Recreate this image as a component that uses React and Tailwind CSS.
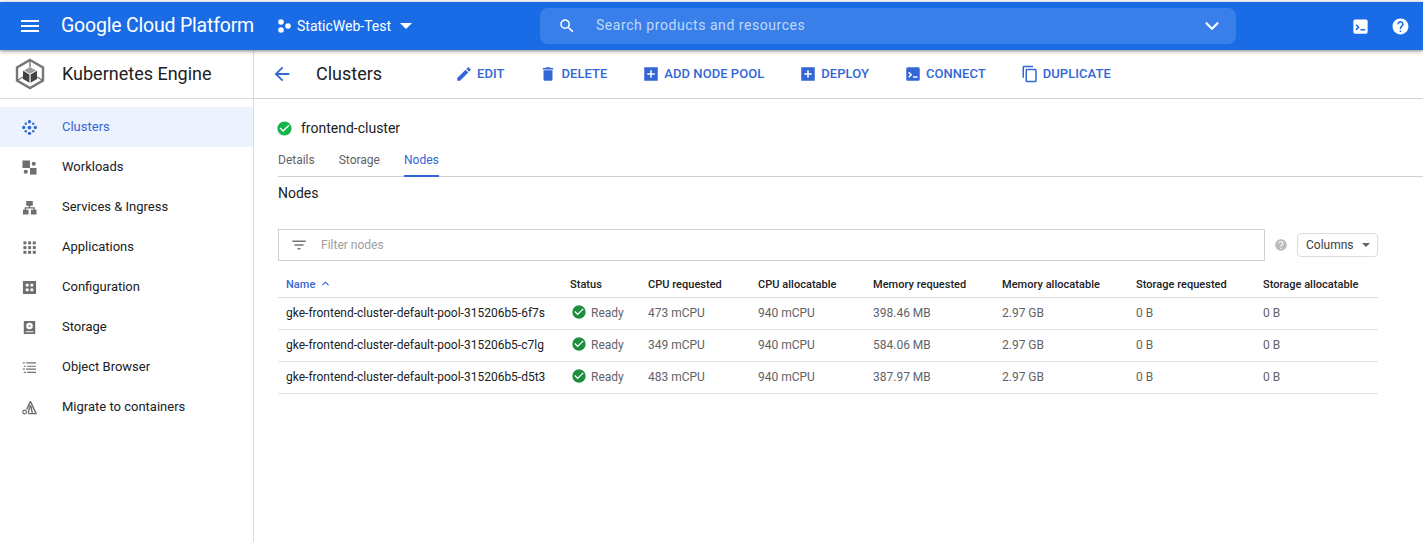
import { ChevronDown, ChevronUp } from "lucide-react";

const P = {
  menu: "M3 18h18v-2H3v2zm0-5h18v-2H3v2zm0-7v2h18V6H3z",
  search: "M15.5 14h-.79l-.28-.27A6.471 6.471 0 0 0 16 9.5 6.5 6.5 0 1 0 9.5 16c1.61 0 3.09-.59 4.23-1.57l.27.28v.79l5 4.99L20.49 19l-4.99-5zm-6 0C7.01 14 5 11.99 5 9.5S7.01 5 9.5 5 14 7.01 14 9.5 11.99 14 9.5 14z",
  edit: "M3 17.25V21h3.75L17.81 9.94l-3.75-3.75L3 17.25zM20.71 7.04a1 1 0 0 0 0-1.41l-2.34-2.34a1 1 0 0 0-1.41 0l-1.83 1.83 3.75 3.75 1.83-1.83z",
  del: "M6 19c0 1.1.9 2 2 2h8c1.1 0 2-.9 2-2V7H6v12zM19 4h-3.5l-1-1h-5l-1 1H5v2h14V4z",
  add: "M3 3h18v18H3V3zm14 10v-2h-4V7h-2v4H7v2h4v4h2v-4h4z",
  copy: "M16 1H4c-1.1 0-2 .9-2 2v14h2V3h12V1zm3 4H8c-1.1 0-2 .9-2 2v14c0 1.1.9 2 2 2h11c1.1 0 2-.9 2-2V7c0-1.1-.9-2-2-2zm0 16H8V7h11v14z",
  term: "M5 3h14a2 2 0 0 1 2 2v14a2 2 0 0 1-2 2H5a2 2 0 0 1-2-2V5a2 2 0 0 1 2-2zm.6 7.4L8.2 13l-2.6 2.6L7 17l4-4-4-4-1.4 1.4zM12 15v2h6v-2h-6z",
  check: "M12 2a10 10 0 1 0 0 20 10 10 0 0 0 0-20zm-2 15l-5-5 1.41-1.41L10 14.17l7.59-7.59L19 8l-9 9z",
  help: "M12 2C6.48 2 2 6.48 2 12s4.48 10 10 10 10-4.48 10-10S17.52 2 12 2zm1 17h-2v-2h2v2zm2.07-7.75l-.9.92C13.45 12.9 13 13.5 13 15h-2v-.5c0-1.1.45-2.1 1.17-2.83l1.24-1.26c.37-.36.59-.86.59-1.41 0-1.1-.9-2-2-2s-2 .9-2 2H8c0-2.21 1.79-4 4-4s4 1.79 4 4c0 .88-.36 1.68-.93 2.25z",
  back: "M20 11H7.83l5.59-5.59L12 4l-8 8 8 8 1.41-1.41L7.83 13H20v-2z",
  filter: "M10 18h4v-2h-4v2zM3 6v2h18V6H3zm3 7h12v-2H6v2z",
};

function Icon({ d, className }) {
  return (
    <svg viewBox="0 0 24 24" fill="currentColor" className={className}>
      <path d={d} fillRule="evenodd" />
    </svg>
  );
}

function NavIcon({ name, className }) {
  return (
    <svg viewBox="0 0 16 16" fill="currentColor" className={className}>
      {name === "clusters" && (
        <>
          <circle cx="8" cy="1.800" r="1.800" />
          <circle cx="8" cy="14.200" r="1.800" />
          <circle cx="1.800" cy="8" r="1.800" />
          <circle cx="14.200" cy="8" r="1.800" />
          <circle cx="8" cy="8" r="2" />
          <circle cx="4" cy="4" r="1.300" />
          <circle cx="12" cy="4" r="1.300" />
          <circle cx="4" cy="12" r="1.300" />
          <circle cx="12" cy="12" r="1.300" />
        </>
      )}
      {name === "workloads" && (
        <>
          <rect x="0.500" y="0.500" width="8" height="8" />
          <rect x="8.500" y="8.500" width="7" height="7" />
          <circle cx="12.500" cy="4" r="2.200" />
          <circle cx="4" cy="12.500" r="2.200" />
        </>
      )}
      {name === "services" && (
        <path d="M4.500 1h7v5H8.800v1.600h4.900v2.900h1.800V15.500h-6v-5h2.700V9.100H4.300v1.400H7V15.500H1v-5h1.800V7.600h4.400V6H4.500z" />
      )}
      {name === "apps" && (
        <>
          {[1.500, 6.500, 11.500].map((y) =>
            [1.500, 6.500, 11.500].map((x) => <rect key={`${x}-${y}`} x={x} y={y} width="3.200" height="3.200" />),
          )}
        </>
      )}
      {name === "config" && (
        <path
          fillRule="evenodd"
          d="M1 1h14v14H1zM4 4v3h3V4zm5 0v3h3V4zM4 9v3h3V9zm5 0v3h3V9z"
        />
      )}
      {name === "storage" && (
        <path
          fillRule="evenodd"
          d="M2.500 1h11a.6.6 0 0 1 .6.6v12.800a.6.6 0 0 1-.6.6h-11a.6.6 0 0 1-.6-.6V1.600a.6.6 0 0 1 .6-.6zM8 3a3.500 3.500 0 1 0 0 7 3.500 3.500 0 0 0 0-7zm0 2.500a1 1 0 1 1 0 2 1 1 0 0 1 0-2zM4 12v1h8v-1z"
        />
      )}
      {name === "browser" && (
        <path d="M1 2.500h2v1.300H1zM4.500 2.500H15v1.300H4.500zM2 6h2v1.300H2zM5.500 6H15v1.300H5.500zM1 9h2v1.300H1zM4.500 9H15v1.300H4.500zM2 12.500h2v1.300H2zM5.500 12.500H15v1.300H5.500z" />
      )}
      {name === "migrate" && (
        <>
          <path d="M9 1.500L15 14.500H6.500M9 1.500L5 10M9 5.500L6.500 14M9.500 6.500L11 14" fill="none" stroke="currentColor" strokeWidth="1.500" />
          <circle cx="2.800" cy="12.800" r="1.900" fill="none" stroke="currentColor" strokeWidth="1.300" />
        </>
      )}
    </svg>
  );
}

const NAV = [
  ["clusters", "Clusters"],
  ["workloads", "Workloads"],
  ["services", "Services & Ingress"],
  ["apps", "Applications"],
  ["config", "Configuration"],
  ["storage", "Storage"],
  ["browser", "Object Browser"],
  ["migrate", "Migrate to containers"],
];

const ACTIONS = [
  [P.edit, "EDIT"],
  [P.del, "DELETE"],
  [P.add, "ADD NODE POOL"],
  [P.add, "DEPLOY"],
  [P.term, "CONNECT"],
  [P.copy, "DUPLICATE"],
];

const COLS = [
  ["Name", "w-[292px]"],
  ["Status", "w-[78px]"],
  ["CPU requested", "w-[110px]"],
  ["CPU allocatable", "w-[115px]"],
  ["Memory requested", "w-[129px]"],
  ["Memory allocatable", "w-[134px]"],
  ["Storage requested", "w-[127px]"],
  ["Storage allocatable", ""],
];

const ROWS = [
  ["gke-frontend-cluster-default-pool-315206b5-6f7s", "473 mCPU", "940 mCPU", "398.46 MB", "2.97 GB", "0 B", "0 B"],
  ["gke-frontend-cluster-default-pool-315206b5-c7lg", "349 mCPU", "940 mCPU", "584.06 MB", "2.97 GB", "0 B", "0 B"],
  ["gke-frontend-cluster-default-pool-315206b5-d5t3", "483 mCPU", "940 mCPU", "387.97 MB", "2.97 GB", "0 B", "0 B"],
];

function Header() {
  return (
    <header className="relative z-10 flex h-12 shrink-0 items-center bg-[#1a6ce6] text-white shadow-[0_1px_4px_rgba(0,0,0,0.5)]">
      <Icon d={P.menu} className="ml-[18px] h-6 w-6" />
      <span className="ml-[19px] w-[193px] whitespace-nowrap text-[19.5px] leading-6 tracking-[-0.2px]">Google Cloud Platform</span>
      <svg viewBox="0 0 14 14" fill="currentColor" className="ml-[23px] h-[14px] w-[14px]">
        <circle cx="4" cy="3" r="2.800" />
        <circle cx="11" cy="7" r="2.800" />
        <circle cx="4" cy="11" r="2.800" />
      </svg>
      <span className="ml-[6px] w-[94px] whitespace-nowrap text-[14px]">StaticWeb-Test</span>
      <span className="ml-[9px] h-0 w-0 border-x-[6px] border-t-[6px] border-x-transparent border-t-white" />
      <div className="ml-[128px] flex h-9 w-[696px] items-center rounded-lg bg-white/[0.13]">
        <Icon d={P.search} className="ml-[18px] h-[18px] w-[18px]" />
        <span className="-mt-[2px] ml-[20px] flex-1 text-[14px] tracking-[0.55px] text-white/70">Search products and resources</span>
        <ChevronDown className="mr-[13px] h-[22px] w-[22px]" strokeWidth={2.300} />
      </div>
      <Icon d={P.term} className="ml-[115px] h-[19px] w-[19px]" />
      <Icon d={P.help} className="ml-[21px] h-[19px] w-[19px]" />
    </header>
  );
}

function Sidebar() {
  return (
    <aside className="flex w-[254px] shrink-0 flex-col border-r border-[#dadce0]">
      <div className="flex h-[49px] shrink-0 items-center border-b border-[#dadce0]">
        <svg viewBox="0 0 30 32" className="ml-[15px] h-8 w-[30px]">
          <path d="M15 2L28 9.500v13L15 30 2 22.500v-13z" fill="none" stroke="#757575" strokeWidth="2.400" />
          <path d="M15 3v6M2 22.500l6-3.500M28 22.500l-6-3.500" fill="none" stroke="#757575" strokeWidth="1.400" />
          <path d="M8 12.800l6.400 3.700v8.200L8 21z" fill="#424242" />
          <path d="M22 12.800l-6.400 3.700v8.200L22 21z" fill="#424242" />
          <path d="M15 9l6 3.400-6 3.400-6-3.400z" fill="#9e9e9e" />
        </svg>
        <span className="ml-[17px] text-[18px] leading-6 text-[#202124]">Kubernetes Engine</span>
      </div>
      <nav className="mt-2 flex flex-col">
        {NAV.map(([icon, label], i) => (
          <div key={label} className={`flex h-10 items-center ${i === 0 ? "bg-[#e8f0fe]/80 text-[#3367d6]" : "text-[#202124]"}`}>
            <NavIcon name={icon} className={`ml-[22px] h-[15px] w-[15px] ${i === 0 ? "text-[#3367d6]" : "text-[#6e6e6e]"}`} />
            <span className="ml-[25px] text-[13px]">{label}</span>
          </div>
        ))}
      </nav>
    </aside>
  );
}

function Toolbar() {
  return (
    <div className="flex h-[49px] shrink-0 items-center border-b border-[#d0d0d0]">
      <Icon d={P.back} className="ml-[17px] h-[22px] w-[22px] text-[#3367d6]" />
      <span className="ml-[23px] w-[75px] text-[18px] leading-6 text-[#202124]">Clusters</span>
      <div className="ml-[64px] flex items-center gap-[35px] text-[13px] font-medium tracking-[0.05px] text-[#3367d6]">
        {ACTIONS.map(([d, label]) => (
          <div key={label} className="flex items-center gap-[4px]">
            <Icon d={d} className="h-[18px] w-[18px]" />
            <span>{label}</span>
          </div>
        ))}
      </div>
    </div>
  );
}

function NodesTable() {
  return (
    <table className="w-[1100px] table-fixed border-collapse text-[12px]">
      <thead>
        <tr className="h-[33px] border-b border-[#dadce0] text-left text-[11px] tracking-[0.03px] text-[#202124]">
          {COLS.map(([label, w], i) => (
            <th key={label} className={`${w} whitespace-nowrap pt-[10px] font-medium ${i === 0 ? "pl-2 text-[#3367d6]" : ""}`}>
              {label}
              {i === 0 && <ChevronUp className="ml-[5px] inline h-[11px] w-[11px] align-[-1px]" strokeWidth={2.500} />}
            </th>
          ))}
        </tr>
      </thead>
      <tbody>
        {ROWS.map(([name, ...rest]) => (
          <tr key={name} className="h-8 border-b border-[#e0e0e0] text-[#5f6368]">
            <td className="whitespace-nowrap pl-2 text-[#202124]">{name}</td>
            <td>
              <div className="ml-[1px] flex items-center gap-[4px]">
                <Icon d={P.check} className="-mt-[2px] h-4 w-4 text-[#1e8e3e]" />
                <span>Ready</span>
              </div>
            </td>
            {rest.map((v, i) => (
              <td key={i} className="whitespace-nowrap">{v}</td>
            ))}
          </tr>
        ))}
      </tbody>
    </table>
  );
}

function Content() {
  return (
    <main className="min-w-0 flex-1">
      <Toolbar />
      <div className="pl-6">
        <div className="mt-[19px] flex h-5 items-center">
          <Icon d={P.check} className="-ml-[2px] h-[17px] w-[17px] text-[#12b54a]" />
          <span className="ml-[8px] text-[14px] text-[#202124]">frontend-cluster</span>
        </div>
        <div className="mt-[11px] flex h-[28px] items-start border-b border-[#d0d0d0] text-[12px] text-[#5f6368]">
          <span className="mr-6 pt-[2px]">Details</span>
          <span className="mr-6 pt-[2px]">Storage</span>
          <span className="h-[28px] border-b-2 border-[#3367d6] pt-[2px] text-[#3367d6]">Nodes</span>
        </div>
        <h2 className="mt-[6px] text-[14px] font-normal leading-5 text-[#202124]">Nodes</h2>
        <div className="mt-[26px] flex w-[1100px] items-center">
          <div className="flex h-8 w-[987px] items-center border border-[#d0d0d0]">
            <Icon d={P.filter} className="ml-[11px] h-[18px] w-[18px] text-[#757575]" />
            <span className="ml-[13px] text-[12px] text-[#9e9e9e]">Filter nodes</span>
          </div>
          <Icon d={P.help} className="ml-[9px] h-[14px] w-[14px] text-[#bdbdbd]" />
          <div className="ml-[9px] flex h-6 flex-1 items-center rounded-sm border border-[#dadce0] text-[12px] text-[#3c4043]">
            <span className="ml-2">Columns</span>
            <span className="ml-[8px] h-0 w-0 border-x-4 border-t-4 border-x-transparent border-t-[#5f6368]" />
          </div>
        </div>
        <div className="mt-[3px]">
          <NodesTable />
        </div>
      </div>
    </main>
  );
}

export default function App() {
  return (
    <div className="flex h-[542px] flex-col overflow-hidden bg-white pt-[2px] font-['Roboto',sans-serif]">
      <Header />
      <div className="flex flex-1">
        <Sidebar />
        <Content />
      </div>
    </div>
  );
}
